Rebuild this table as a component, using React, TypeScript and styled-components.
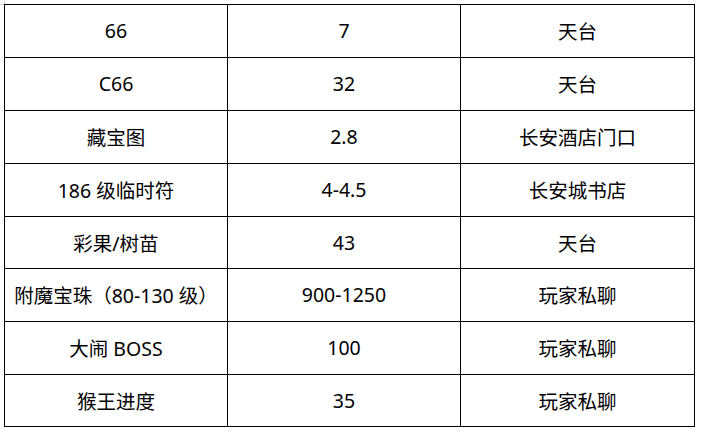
import React from "react";
import styled, { createGlobalStyle } from "styled-components";

const Global = createGlobalStyle`
  html, body { margin: 0; padding: 0; background: #ffffff; }
  body { font-family: "Noto Sans", "Noto Sans CJK SC", sans-serif; }
`;

const Sheet = styled.div`
  position: relative;
  padding: 4px 0 0 4px;
  &::before {
    content: "";
    position: absolute;
    left: 0;
    top: 4px;
    width: 4px;
    height: 1px;
    background: #d4d4d4;
  }
  &::after {
    content: "";
    position: absolute;
    left: 4px;
    top: 0;
    width: 1px;
    height: 4px;
    background: #d4d4d4;
  }
`;

const Grid = styled.div`
  display: grid;
  grid-template-columns: 223px 233px 234px;
  grid-template-rows: 53px 53px 53px 53px 52px 53px 53px 52px;
  width: max-content;
  border-top: 1px solid #000;
  border-left: 1px solid #000;
`;

const Cell = styled.div`
  display: flex;
  align-items: center;
  justify-content: center;
  border-right: 1px solid #000;
  border-bottom: 1px solid #000;
  font-family: "Noto Sans", "Noto Sans CJK SC", sans-serif;
  font-size: 19.5px;
  color: #000;
  white-space: nowrap;
  padding-bottom: 1px;
`;

const rows: [string, string, string][] = [
  ["66", "7", "天台"],
  ["C66", "32", "天台"],
  ["藏宝图", "2.8", "长安酒店门口"],
  ["186 级临时符", "4-4.5", "长安城书店"],
  ["彩果/树苗", "43", "天台"],
  ["附魔宝珠（80-130 级）", "900-1250", "玩家私聊"],
  ["大闹 BOSS", "100", "玩家私聊"],
  ["猴王进度", "35", "玩家私聊"],
];

export default function App() {
  return (
    <>
      <Global />
      <Sheet>
        <Grid>
          {rows.map((r, i) =>
            r.map((c, j) => <Cell key={`${i}-${j}`}>{c}</Cell>)
          )}
        </Grid>
      </Sheet>
    </>
  );
}
